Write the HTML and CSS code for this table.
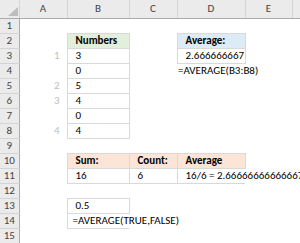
FILE: index.html
```html
<!DOCTYPE html>
<html>
    <head>
        <title>AVERAGE function</title>
        <link rel="stylesheet" href="styles.css">
    </head>
    <body>
        <table class="sheet">
            <colgroup>
                <col class="col-hdr">
                <col class="col-a">
                <col class="col-b">
                <col class="col-c">
                <col class="col-d">
                <col class="col-e">
                <col class="col-f">
            </colgroup>
            <tr class="head">
                <th class="corner">
                    <svg width="11" height="10" viewBox="0 0 11 10"><polygon points="10,0 10,9 0,9" fill="#bdbdbd"/></svg>
                </th>
                <th>A</th><th>B</th><th>C</th><th>D</th><th>E</th><th></th>
            </tr>
            <tr><th>1</th><td></td><td></td><td></td><td></td><td></td><td></td></tr>
            <tr><th>2</th><td></td><td class="box ind bold green">Numbers</td><td></td><td class="box ind bold blue">Average:</td><td></td><td></td></tr>
            <tr><th>3</th><td class="idx">1</td><td class="box ind">3</td><td></td><td class="box ind">2.666666667</td><td></td><td></td></tr>
            <tr><th>4</th><td></td><td class="box ind">0</td><td></td><td class="formula">=AVERAGE(B3:B8)</td><td></td><td></td></tr>
            <tr><th>5</th><td class="idx">2</td><td class="box ind">5</td><td></td><td></td><td></td><td></td></tr>
            <tr><th>6</th><td class="idx">3</td><td class="box ind">4</td><td></td><td></td><td></td><td></td></tr>
            <tr><th>7</th><td></td><td class="box ind">0</td><td></td><td></td><td></td><td></td></tr>
            <tr><th>8</th><td class="idx">4</td><td class="box ind">4</td><td></td><td></td><td></td><td></td></tr>
            <tr><th>9</th><td></td><td></td><td></td><td></td><td></td><td></td></tr>
            <tr><th>10</th><td></td><td class="box ind bold orange">Sum:</td><td class="box ind bold orange">Count:</td><td class="box ind bold orange">Average</td><td></td><td></td></tr>
            <tr><th>11</th><td></td><td class="box ind">16</td><td class="box ind">6</td><td class="box open ind">16/6 = 2.66666666666667</td><td></td><td></td></tr>
            <tr><th>12</th><td></td><td></td><td></td><td></td><td></td><td></td></tr>
            <tr><th>13</th><td></td><td class="box ind">0.5</td><td></td><td></td><td></td><td></td></tr>
            <tr><th>14</th><td></td><td class="box open half">=AVERAGE(TRUE,FALSE)</td><td></td><td></td><td></td><td></td></tr>
            <tr><th>15</th><td></td><td></td><td></td><td></td><td></td><td></td></tr>
        </table>
    </body>
</html>
```

FILE: styles.css
```css
body { margin: 0; overflow: hidden; background: #fff; }

.sheet {
    border-collapse: collapse;
    table-layout: fixed;
    width: 356px;
    font-family: "Carlito", "Calibri", "Liberation Sans", sans-serif;
    font-size: 11px;
    color: #000;
}
.col-hdr { width: 19px; }
.col-a { width: 48px; }
.col-b { width: 62px; }
.col-c { width: 48px; }
.col-d { width: 68px; }
.col-e { width: 47px; }
.col-f { width: 64px; }

.sheet tr { height: 15px; }
.sheet tr.head { height: 18px; }

.sheet th {
    background: #ebebeb;
    color: #444;
    font-weight: normal;
    padding: 0;
    text-align: center;
    border-right: 1px solid #ababab;
    border-bottom: 1px solid #d4d4d4;
    line-height: 14px;
}
.sheet tr.head th {
    border-right: 1px solid #d4d4d4;
    border-bottom: 1px solid #ababab;
}
.sheet th.corner {
    text-align: right;
    vertical-align: bottom;
    border-right: 1px solid #ababab;
}
.corner svg { display: block; margin: 0 0 1px auto; }

.sheet td {
    padding: 0 0 0 1px;
    white-space: nowrap;
    overflow: visible;
    line-height: 14px;
    vertical-align: bottom;
}

.box { border: 1px solid #d9d9d9; }
.box.open { border-right: none; }
.ind { padding-left: 8px !important; }
.half { padding-left: 5px !important; }
.bold { font-weight: bold; }
.green { background: #e2efda; }
.blue { background: #ddebf7; }
.orange { background: #fce4d6; }
.idx { color: #c0c0c0; text-align: right; padding-right: 7px !important; }
.formula { padding-left: 1px; }
```
